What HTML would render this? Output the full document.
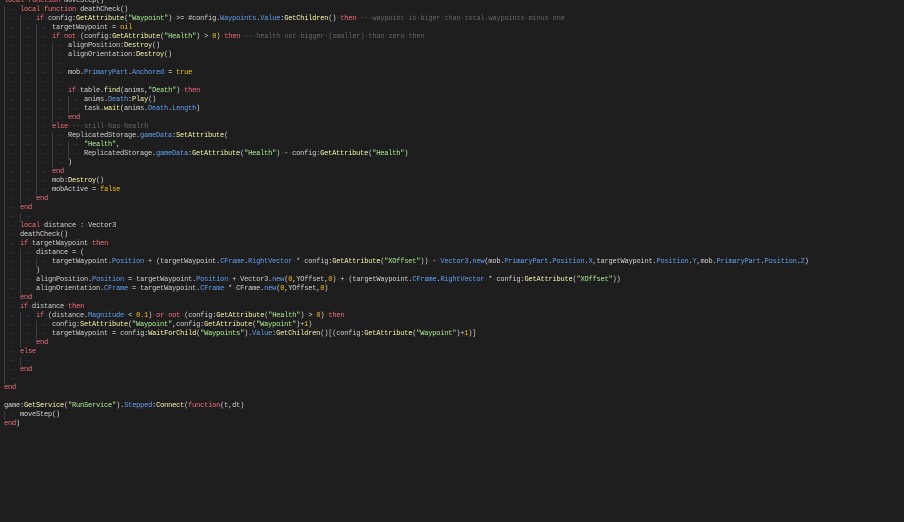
<!DOCTYPE html>
<html><head><meta charset="utf-8"><style>
html,body{margin:0;padding:0;width:904px;height:522px;overflow:hidden;background:#1e1e1e}
#c{position:absolute;left:0;top:-3.5px;font-family:"Liberation Mono",monospace;font-size:7px;letter-spacing:-0.2px;line-height:9px;color:#d4d4d4}
.l{height:9px;padding-left:4px;white-space:pre;overflow:visible}
.t{display:inline-block;width:16px;height:9px;vertical-align:top;border-left:1px solid #3c3c3c;box-sizing:border-box;text-align:center;color:#4e4e4e;letter-spacing:0}
i{font-style:normal;color:#4a4a4a}
.k{color:#f86d7c}.s{color:#adf195}.n{color:#ffc600}.m{color:#61a1f1}.f{color:#fdfbac}.c{color:#666666}.c i{color:#555}
</style></head><body><div id="c">
<div class="l"><span class="k">local</span><i>·</i><span class="k">function</span><i>·</i>moveStep()</div>
<div class="l"><span class="t">→</span><span class="k">local</span><i>·</i><span class="k">function</span><i>·</i>deathCheck()</div>
<div class="l"><span class="t">→</span><span class="t">→</span><span class="k">if</span><i>·</i>config:<span class="f">GetAttribute</span>(<span class="s">"Waypoint"</span>)<i>·</i>&gt;=<i>·</i>#config.<span class="m">Waypoints</span>.<span class="m">Value</span>:<span class="f">GetChildren</span>()<i>·</i><span class="k">then</span><i>·</i><span class="c">--<i>·</i>waypoint<i>·</i>is<i>·</i>biger<i>·</i>than<i>·</i>total<i>·</i>waypoints<i>·</i>minus<i>·</i>one</span></div>
<div class="l"><span class="t">→</span><span class="t">→</span><span class="t">→</span>targetWaypoint<i>·</i>=<i>·</i><span class="n">nil</span></div>
<div class="l"><span class="t">→</span><span class="t">→</span><span class="t">→</span><span class="k">if</span><i>·</i><span class="k">not</span><i>·</i>(config:<span class="f">GetAttribute</span>(<span class="s">"Health"</span>)<i>·</i>&gt;<i>·</i><span class="n">0</span>)<i>·</i><span class="k">then</span><i>·</i><span class="c">--<i>·</i>health<i>·</i>not<i>·</i>bigger<i>·</i>(smaller)<i>·</i>than<i>·</i>zero<i>·</i>then</span></div>
<div class="l"><span class="t">→</span><span class="t">→</span><span class="t">→</span><span class="t">→</span>alignPosition:<span class="f">Destroy</span>()</div>
<div class="l"><span class="t">→</span><span class="t">→</span><span class="t">→</span><span class="t">→</span>alignOrientation:<span class="f">Destroy</span>()</div>
<div class="l"><span class="t">→</span><span class="t">→</span><span class="t">→</span><span class="t">→</span></div>
<div class="l"><span class="t">→</span><span class="t">→</span><span class="t">→</span><span class="t">→</span>mob.<span class="m">PrimaryPart</span>.<span class="m">Anchored</span><i>·</i>=<i>·</i><span class="n">true</span></div>
<div class="l"><span class="t">→</span><span class="t">→</span><span class="t">→</span><span class="t">→</span></div>
<div class="l"><span class="t">→</span><span class="t">→</span><span class="t">→</span><span class="t">→</span><span class="k">if</span><i>·</i>table.<span class="f">find</span>(anims,<span class="s">"Death"</span>)<i>·</i><span class="k">then</span></div>
<div class="l"><span class="t">→</span><span class="t">→</span><span class="t">→</span><span class="t">→</span><span class="t">→</span>anims.<span class="m">Death</span>:<span class="f">Play</span>()</div>
<div class="l"><span class="t">→</span><span class="t">→</span><span class="t">→</span><span class="t">→</span><span class="t">→</span>task.<span class="f">wait</span>(anims.<span class="m">Death</span>.<span class="m">Length</span>)</div>
<div class="l"><span class="t">→</span><span class="t">→</span><span class="t">→</span><span class="t">→</span><span class="k">end</span></div>
<div class="l"><span class="t">→</span><span class="t">→</span><span class="t">→</span><span class="k">else</span><i>·</i><span class="c">--<i>·</i>still<i>·</i>has<i>·</i>health</span></div>
<div class="l"><span class="t">→</span><span class="t">→</span><span class="t">→</span><span class="t">→</span>ReplicatedStorage.<span class="m">gameData</span>:<span class="f">SetAttribute</span>(</div>
<div class="l"><span class="t">→</span><span class="t">→</span><span class="t">→</span><span class="t">→</span><span class="t">→</span><span class="s">"Health"</span>,</div>
<div class="l"><span class="t">→</span><span class="t">→</span><span class="t">→</span><span class="t">→</span><span class="t">→</span>ReplicatedStorage.<span class="m">gameData</span>:<span class="f">GetAttribute</span>(<span class="s">"Health"</span>)<i>·</i>-<i>·</i>config:<span class="f">GetAttribute</span>(<span class="s">"Health"</span>)</div>
<div class="l"><span class="t">→</span><span class="t">→</span><span class="t">→</span><span class="t">→</span>)</div>
<div class="l"><span class="t">→</span><span class="t">→</span><span class="t">→</span><span class="k">end</span></div>
<div class="l"><span class="t">→</span><span class="t">→</span><span class="t">→</span>mob:<span class="f">Destroy</span>()</div>
<div class="l"><span class="t">→</span><span class="t">→</span><span class="t">→</span>mobActive<i>·</i>=<i>·</i><span class="n">false</span></div>
<div class="l"><span class="t">→</span><span class="t">→</span><span class="k">end</span></div>
<div class="l"><span class="t">→</span><span class="k">end</span></div>
<div class="l"><span class="t">→</span><span class="t">→</span></div>
<div class="l"><span class="t">→</span><span class="k">local</span><i>·</i>distance<i>·</i>:<i>·</i>Vector3</div>
<div class="l"><span class="t">→</span>deathCheck()</div>
<div class="l"><span class="t">→</span><span class="k">if</span><i>·</i>targetWaypoint<i>·</i><span class="k">then</span></div>
<div class="l"><span class="t">→</span><span class="t">→</span>distance<i>·</i>=<i>·</i>(</div>
<div class="l"><span class="t">→</span><span class="t">→</span><span class="t">→</span>targetWaypoint.<span class="m">Position</span><i>·</i>+<i>·</i>(targetWaypoint.<span class="m">CFrame</span>.<span class="m">RightVector</span><i>·</i>*<i>·</i>config:<span class="f">GetAttribute</span>(<span class="s">"XOffset"</span>))<i>·</i>-<i>·</i><span class="m">Vector3</span>.<span class="m">new</span>(mob.<span class="m">PrimaryPart</span>.<span class="m">Position</span>.<span class="m">X</span>,targetWaypoint.<span class="m">Position</span>.<span class="m">Y</span>,mob.<span class="m">PrimaryPart</span>.<span class="m">Position</span>.<span class="m">Z</span>)</div>
<div class="l"><span class="t">→</span><span class="t">→</span>)</div>
<div class="l"><span class="t">→</span><span class="t">→</span>alignPosition.<span class="m">Position</span><i>·</i>=<i>·</i>targetWaypoint.<span class="m">Position</span><i>·</i>+<i>·</i>Vector3.<span class="m">new</span>(<span class="n">0</span>,YOffset,<span class="n">0</span>)<i>·</i>+<i>·</i>(targetWaypoint.<span class="m">CFrame</span>.<span class="m">RightVector</span><i>·</i>*<i>·</i>config:<span class="f">GetAttribute</span>(<span class="s">"XOffset"</span>))</div>
<div class="l"><span class="t">→</span><span class="t">→</span>alignOrientation.<span class="m">CFrame</span><i>·</i>=<i>·</i>targetWaypoint.<span class="m">CFrame</span><i>·</i>*<i>·</i>CFrame.<span class="m">new</span>(<span class="n">0</span>,YOffset,<span class="n">0</span>)</div>
<div class="l"><span class="t">→</span><span class="k">end</span></div>
<div class="l"><span class="t">→</span><span class="k">if</span><i>·</i>distance<i>·</i><span class="k">then</span></div>
<div class="l"><span class="t">→</span><span class="t">→</span><span class="k">if</span><i>·</i>(distance.<span class="m">Magnitude</span><i>·</i>&lt;<i>·</i><span class="n">0.1</span>)<i>·</i><span class="k">or</span><i>·</i><span class="k">not</span><i>·</i>(config:<span class="f">GetAttribute</span>(<span class="s">"Health"</span>)<i>·</i>&gt;<i>·</i><span class="n">0</span>)<i>·</i><span class="k">then</span></div>
<div class="l"><span class="t">→</span><span class="t">→</span><span class="t">→</span>config:<span class="f">SetAttribute</span>(<span class="s">"Waypoint"</span>,config:<span class="f">GetAttribute</span>(<span class="s">"Waypoint"</span>)+<span class="n">1</span>)</div>
<div class="l"><span class="t">→</span><span class="t">→</span><span class="t">→</span>targetWaypoint<i>·</i>=<i>·</i>config:<span class="f">WaitForChild</span>(<span class="s">"Waypoints"</span>).<span class="m">Value</span>:<span class="f">GetChildren</span>()[(config:<span class="f">GetAttribute</span>(<span class="s">"Waypoint"</span>)+<span class="n">1</span>)]</div>
<div class="l"><span class="t">→</span><span class="t">→</span><span class="k">end</span></div>
<div class="l"><span class="t">→</span><span class="k">else</span></div>
<div class="l"><span class="t">→</span><span class="t">→</span></div>
<div class="l"><span class="t">→</span><span class="k">end</span></div>
<div class="l"><span class="t">→</span></div>
<div class="l"><span class="k">end</span></div>
<div class="l"></div>
<div class="l">game:<span class="f">GetService</span>(<span class="s">"RunService"</span>).<span class="m">Stepped</span>:<span class="f">Connect</span>(<span class="k">function</span>(t,dt)</div>
<div class="l"><span class="t">→</span>moveStep()</div>
<div class="l"><span class="k">end</span>)</div>
</div></body></html>
